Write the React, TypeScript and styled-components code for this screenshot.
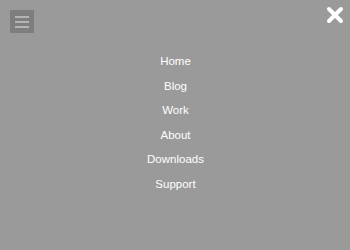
import React from 'react'
import styled, { createGlobalStyle } from 'styled-components';

const links = ['Home', 'Blog', 'Work', 'About', 'Downloads', 'Support'];

const App = () => {
  return (
    <>
      <GlobalStyle />
      <Overlay>
        <Toolbar>
          <MenuButton aria-label="menu">
            <Bar />
            <Bar />
            <Bar />
          </MenuButton>
          <CloseButton aria-label="close">
            <svg width="18" height="18" viewBox="0 0 18 18">
              <path d="M3 3 L15 15 M15 3 L3 15" stroke="#fff" strokeWidth="4" strokeLinecap="round" />
            </svg>
          </CloseButton>
        </Toolbar>
        <Nav>
          {links.map((l) => (
            <NavLink key={l} href="#">{l}</NavLink>
          ))}
        </Nav>
      </Overlay>
    </>
  )
}

const GlobalStyle = createGlobalStyle`
    html, body {
        margin: 0;
        padding: 0;
        background: #9a9a9a;
    }
    body {
        font-family: "Liberation Sans", Arial, sans-serif;
    }
`;

const Overlay = styled.div`
    width: 350px;
    height: 250px;
    background: #9a9a9a;
    display: flex;
    flex-direction: column;
`;

const Toolbar = styled.div`
    display: flex;
    justify-content: space-between;
    align-items: flex-start;
    padding: 10px 4px 0 10px;
    height: 39px;
    box-sizing: border-box;
`;

const MenuButton = styled.div`
    width: 24px;
    height: 23px;
    background: #7e7e7e;
    display: flex;
    flex-direction: column;
    align-items: center;
    justify-content: center;
    gap: 3px;
`;

const Bar = styled.span`
    display: block;
    width: 14px;
    height: 2px;
    background: #b4b4b4;
`;

const CloseButton = styled.div`
    margin-top: -6px;
    width: 22px;
    height: 22px;
    display: flex;
    align-items: center;
    justify-content: center;
`;

const Nav = styled.nav`
    display: flex;
    flex-direction: column;
    align-items: center;
    padding-top: 10px;
    padding-left: 1px;
`;

const NavLink = styled.a`
    color: #fff;
    font-size: 11.5px;
    line-height: 24.6px;
    text-decoration: none;
`;

export default App;
